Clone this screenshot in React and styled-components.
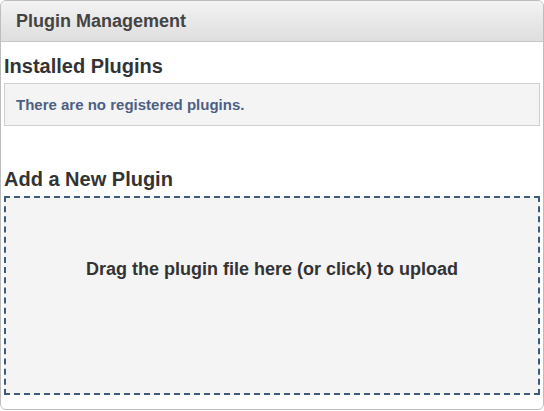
import styled, { createGlobalStyle } from 'styled-components';

const GlobalStyle = createGlobalStyle`
  html, body {
    margin: 0;
    padding: 0;
    background: #ffffff;
  }
  body {
    font-family: "Liberation Sans", Arial, sans-serif;
  }
`;

const App = () => {
  return (
    <>
      <GlobalStyle />
      <Panel>
        <PanelHeader>
          <h2>Plugin Management</h2>
        </PanelHeader>
        <PanelBody>
          <SectionTitle>Installed Plugins</SectionTitle>
          <InfoBox>There are no registered plugins.</InfoBox>

          <SectionTitle spaced>Add a New Plugin</SectionTitle>
          <DropZone>Drag the plugin file here (or click) to upload</DropZone>
        </PanelBody>
      </Panel>
    </>
  );
};

// Styled Components
const Panel = styled.div`
  box-sizing: border-box;
  width: 544px;
  height: 410px;
  border: 1px solid #bdbdbd;
  border-radius: 6px;
  overflow: hidden;
  background: #ffffff;
  display: flex;
  flex-direction: column;
`;

const PanelHeader = styled.header`
  height: 40px;
  display: flex;
  align-items: center;
  padding-left: 15px;
  border-bottom: 1px solid #c6c6c6;
  background: linear-gradient(to bottom, #f3f3f3, #dedede);

  h2 {
    margin: 0;
    font-size: 18px;
    font-weight: bold;
    color: #444444;
  }
`;

const PanelBody = styled.div`
  padding: 13px 3px 13px;
  display: flex;
  flex-direction: column;
`;

const SectionTitle = styled.h3`
  margin: ${props => (props.spaced ? '42px 0 5px' : '0 0 5px')};
  font-size: 20px;
  line-height: 23px;
  font-weight: bold;
  color: #333333;
`;

const InfoBox = styled.div`
  border: 1px solid #d0d0d0;
  background: #f4f4f4;
  padding: 12px 11px;
  font-size: 15px;
  line-height: 17px;
  font-weight: bold;
  color: #4d6084;
`;

const DropZone = styled.div`
  box-sizing: border-box;
  height: 199px;
  border: 2px dashed #3f5b7c;
  background: #f4f4f4;
  padding-top: 61px;
  text-align: center;
  font-size: 18px;
  line-height: 21px;
  font-weight: bold;
  color: #333333;
  cursor: pointer;
`;

export default App;
